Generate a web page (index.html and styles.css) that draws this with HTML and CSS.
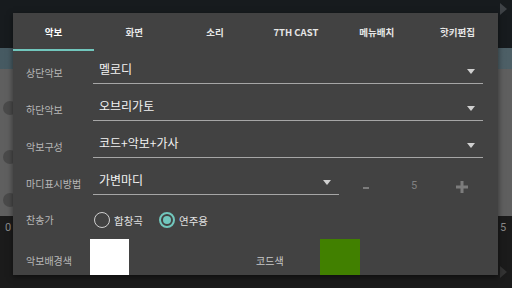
FILE: index.html
```html
<!DOCTYPE html>
<html>
<head>
    <meta charset="utf-8">
    <link rel="stylesheet" href="styles.css">
</head>
<body>
    <div id="screen">
        <!-- page behind the dialog -->
        <div class="band band-top"></div>
        <div class="band band-teal"></div>
        <div class="band band-grey"></div>
        <div class="band band-dark"></div>
        <div class="bg-dot" style="top:101px"></div>
        <div class="bg-dot" style="top:150px"></div>
        <div class="bg-dot" style="top:193px"></div>
        <div class="bg-num left">0</div>
        <div class="bg-num right">5</div>
        <div class="bg-arrow top"></div>
        <div class="bg-arrow bottom"></div>

        <div class="dialog">
            <div class="tabs">
                <div class="tab active">악보</div>
                <div class="tab">화면</div>
                <div class="tab">소리</div>
                <div class="tab">7TH CAST</div>
                <div class="tab">메뉴배치</div>
                <div class="tab">핫키편집</div>
            </div>

            <div class="rows">
                <div class="row">
                    <div class="label">상단악보</div>
                    <div class="field"><span class="value">멜로디</span><span class="caret"></span></div>
                </div>
                <div class="row">
                    <div class="label">하단악보</div>
                    <div class="field"><span class="value">오브리가토</span><span class="caret"></span></div>
                </div>
                <div class="row">
                    <div class="label">악보구성</div>
                    <div class="field"><span class="value">코드+악보+가사</span><span class="caret"></span></div>
                </div>
                <div class="row">
                    <div class="label">마디표시방법</div>
                    <div class="field short"><span class="value">가변마디</span><span class="caret"></span></div>
                    <div class="stepper">
                        <span class="step minus"><span class="bar"></span></span>
                        <span class="step num">5</span>
                        <span class="step plus"><span class="bar"></span><span class="bar vertical"></span></span>
                    </div>
                </div>
                <div class="row radios">
                    <div class="label">찬송가</div>
                    <label class="radio"><span class="circle"></span>합창곡</label>
                    <label class="radio checked"><span class="circle"></span>연주용</label>
                </div>
                <div class="row colors">
                    <div class="label narrow">악보배경색</div>
                    <div class="swatch white"></div>
                    <div class="label color-label">코드색</div>
                    <div class="swatch green"></div>
                </div>
            </div>
        </div>
    </div>
</body>
</html>
```

FILE: styles.css
```css
* {
    margin: 0;
    padding: 0;
    box-sizing: border-box;
}

html, body {
    width: 100%;
    height: 100%;
    overflow: hidden;
    background: #1b1b1b;
    font-family: "Noto Sans CJK KR", "Noto Sans", Roboto, sans-serif;
}

#screen {
    position: relative;
    width: 512px;
    height: 288px;
    display: flex;
    flex-direction: column;
}

.band-top {
    height: 48px;
    background: #171b1e;
}

.band-teal {
    height: 21px;
    background: linear-gradient(to right, #465a62, #4d5f66);
}

.band-grey {
    height: 147px;
    background: #5f5f5f;
}

.band-dark {
    flex: 1;
    background: #1b1b1b;
}

.bg-dot {
    position: absolute;
    left: 3px;
    width: 14px;
    height: 14px;
    border-radius: 50%;
    background: #4a4a4a;
}

.bg-num {
    position: absolute;
    top: 221px;
    font-size: 11px;
    color: #8a8a8a;
    font-family: Roboto, sans-serif;
}

.bg-num.left { left: 5px; }
.bg-num.right { left: 500px; }

.bg-arrow {
    position: absolute;
    left: 500px;
    width: 0;
    height: 0;
    border-top: 6px solid transparent;
    border-bottom: 6px solid transparent;
    border-left: 7px solid #3e4246;
}

.bg-arrow.top { top: 3px; }
.bg-arrow.bottom { top: 266px; border-left-color: #333; }

.dialog {
    position: absolute;
    left: 13px;
    top: 13px;
    width: 485px;
    height: 262px;
    background: #424242;
    box-shadow: 0 2px 6px rgba(0,0,0,0.5);
    overflow: hidden;
    display: flex;
    flex-direction: column;
}

.tabs {
    display: flex;
    height: 38px;
    flex-shrink: 0;
}

.tab {
    flex: 1;
    display: flex;
    align-items: center;
    justify-content: center;
    font-size: 9.5px;
    font-weight: bold;
    color: #e6e6e6;
    border-bottom: 2px solid transparent;
    padding-top: 1px;
}

.tab.active {
    color: #ffffff;
    border-bottom-color: #71c7bd;
}

.rows {
    display: flex;
    flex-direction: column;
    padding: 0 15px 0 13px;
}

.row {
    display: flex;
    height: 37px;
    flex-shrink: 0;
    align-items: flex-start;
}

.label {
    width: 67px;
    flex-shrink: 0;
    font-size: 10px;
    color: #b8b8b8;
    padding-top: 14px;
}

.field {
    flex: 1;
    height: 33px;
    display: flex;
    align-items: flex-end;
    justify-content: space-between;
    padding: 0 8px 7px 6px;
    border-bottom: 1.5px solid #a6a6a6;
}

.field.short {
    flex: 0 0 246px;
}

.value {
    font-size: 12px;
    color: #f2f2f2;
    line-height: 14px;
}

.caret {
    width: 0;
    height: 0;
    border-left: 4px solid transparent;
    border-right: 4px solid transparent;
    border-top: 5px solid #d0d0d0;
    margin-bottom: 2px;
}

.stepper {
    display: flex;
    align-items: center;
    height: 24px;
    padding: 13px 0 0 3px;
    box-sizing: content-box;
}

.step {
    width: 48px;
    height: 14px;
    display: flex;
    align-items: center;
    justify-content: center;
    position: relative;
    color: #808080;
    font-family: Roboto, sans-serif;
    font-size: 11px;
}

.step .bar {
    position: absolute;
    left: 50%;
    top: 50%;
    width: 6px;
    height: 2px;
    transform: translate(-50%, -50%);
    background: #7c7c7c;
}

.step.minus .bar {
    margin-top: 1px;
}

.step.num {
    padding-bottom: 3px;
}

.step.plus .bar {
    width: 12px;
    height: 3px;
}

.step.plus .bar.vertical {
    width: 3px;
    height: 12px;
}

.radios {
    align-items: center;
}

.radios .label {
    padding-top: 4px;
}

.radio {
    display: flex;
    align-items: center;
    gap: 4px;
    font-size: 10.5px;
    color: #e0e0e0;
    margin-left: 1px;
    margin-right: 15px;
    padding-top: 5px;
}

.circle {
    width: 16px;
    height: 16px;
    border-radius: 50%;
    border: 1.7px solid #cfcfcf;
    display: flex;
    align-items: center;
    justify-content: center;
}

.radio.checked .circle {
    border: 2px solid #71c7bd;
}

.radio.checked .circle::after {
    content: "";
    width: 8px;
    height: 8px;
    border-radius: 50%;
    background: #71c7bd;
}

.colors {
    height: 40px;
    padding-top: 3px;
}

.colors .label {
    padding-top: 14px;
}

.label.narrow {
    width: 64px;
}

.swatch {
    width: 39px;
    height: 40px;
    flex-shrink: 0;
}

.swatch.white {
    background: #ffffff;
}

.swatch.green {
    width: 40px;
    background: #418000;
}

.label.color-label {
    width: auto;
    margin-left: 127px;
    margin-right: 36px;
    color: #c8c8c8;
}
```
